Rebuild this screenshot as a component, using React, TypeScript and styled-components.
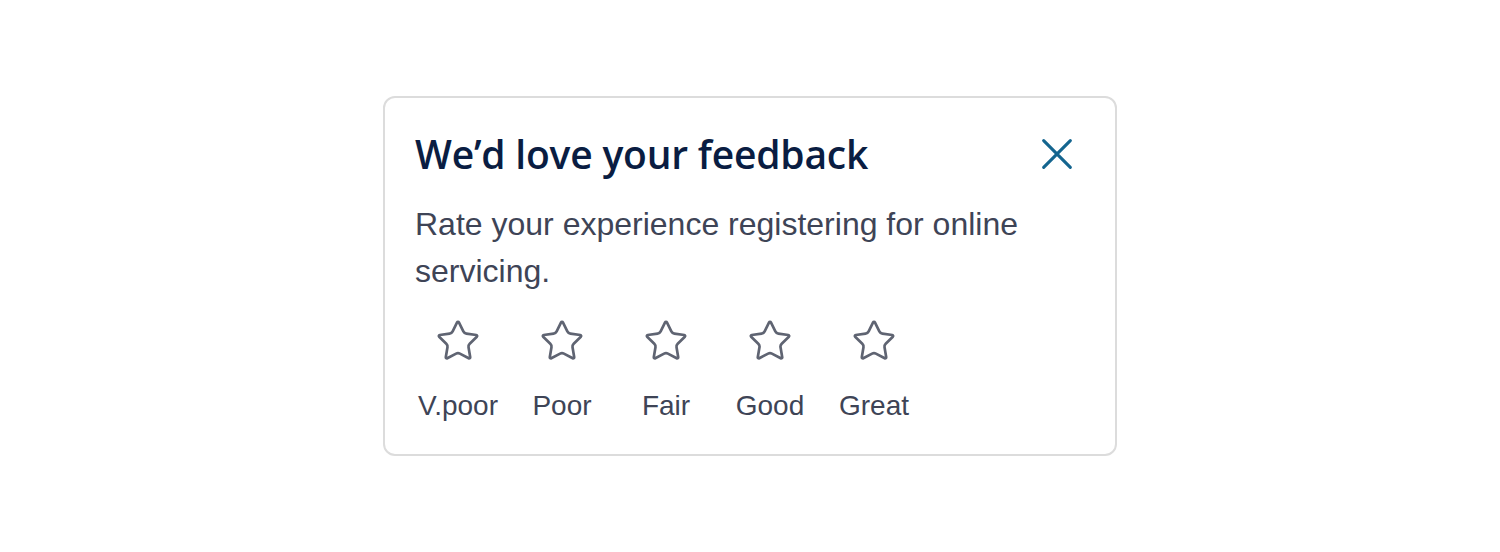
import * as React from "react";
import styled, { createGlobalStyle } from "styled-components";

const GlobalStyle = createGlobalStyle`
  html, body {
    margin: 0;
    padding: 0;
    background: #ffffff;
  }
  body {
    font-family: "Liberation Sans", Arial, sans-serif;
  }
`;

const ratings = ["V.poor", "Poor", "Fair", "Good", "Great"];

function StarIcon() {
  return (
    <svg width="46" height="46" viewBox="0 0 24 24" fill="none" stroke="currentColor" strokeWidth="1.4" strokeLinecap="round" strokeLinejoin="round">
      <path d="M11.525 2.295a.53.53 0 0 1 .95 0l2.31 4.679a2.123 2.123 0 0 0 1.595 1.16l5.166.756a.53.53 0 0 1 .294.904l-3.736 3.638a2.123 2.123 0 0 0-.611 1.878l.882 5.14a.53.53 0 0 1-.771.56l-4.618-2.428a2.122 2.122 0 0 0-1.973 0L6.396 21.01a.53.53 0 0 1-.77-.56l.881-5.139a2.122 2.122 0 0 0-.611-1.879L2.16 9.795a.53.53 0 0 1 .294-.906l5.165-.755a2.122 2.122 0 0 0 1.597-1.16z" />
    </svg>
  );
}

function CloseIcon() {
  return (
    <svg width="36" height="36" viewBox="0 0 36 36" fill="none" stroke="currentColor" strokeWidth="3.5" strokeLinecap="round">
      <path d="M3 3L33 33M33 3L3 33" />
    </svg>
  );
}

function App() {
  const [selected, setSelected] = React.useState<number | null>(null);

  return (
    <Page>
      <GlobalStyle />
      <Card>
        <Header>
          <Title>We’d love your feedback</Title>
          <CloseButton aria-label="Close">
            <CloseIcon />
          </CloseButton>
        </Header>
        <Description>
          Rate your experience registering for online servicing.
        </Description>
        <RatingRow>
          {ratings.map((label, index) => (
            <RatingButton
              key={label}
              $active={selected !== null && index <= selected}
              onClick={() => setSelected(index)}
            >
              <StarIcon />
              <RatingLabel>{label}</RatingLabel>
            </RatingButton>
          ))}
        </RatingRow>
      </Card>
    </Page>
  );
}

const Page = styled.div`
  min-height: 100vh;
  display: flex;
  align-items: center;
  justify-content: center;
`;

const Card = styled.div`
  width: 734px;
  box-sizing: border-box;
  border: 2px solid #dcdcdc;
  border-radius: 12px;
  padding: 30px 30px 32px;
  background: #ffffff;
`;

const Header = styled.div`
  display: flex;
  align-items: center;
  justify-content: space-between;
`;

const Title = styled.h2`
  margin: 0;
  font-family: "Open Sans", "Noto Sans", sans-serif;
  font-size: 39px;
  font-weight: 600;
  line-height: 52px;
  letter-spacing: -0.2px;
  color: #0a1d42;
`;

const CloseButton = styled.button`
  border: none;
  background: none;
  padding: 2px;
  margin-right: 10px;
  width: 36px;
  height: 36px;
  box-sizing: border-box;
  color: #14658f;
  cursor: pointer;
  display: flex;

  svg {
    width: 32px;
    height: 32px;
  }
`;

const Description = styled.p`
  margin: 21px 0 0;
  font-size: 32px;
  line-height: 47px;
  color: #3e4456;
  max-width: 640px;
`;

const RatingRow = styled.div`
  display: flex;
  gap: 18px;
  margin-top: 23px;
`;

const RatingButton = styled.button<{ $active: boolean }>`
  width: 86px;
  display: flex;
  flex-direction: column;
  align-items: center;
  border: none;
  background: none;
  padding: 0;
  cursor: pointer;
  color: ${(p) => (p.$active ? "#14658f" : "#5f6472")};
  font-family: inherit;
`;

const RatingLabel = styled.span`
  margin-top: 26px;
  font-size: 28px;
  line-height: 32px;
  color: #3e4456;
  white-space: nowrap;
`;

export default App;
